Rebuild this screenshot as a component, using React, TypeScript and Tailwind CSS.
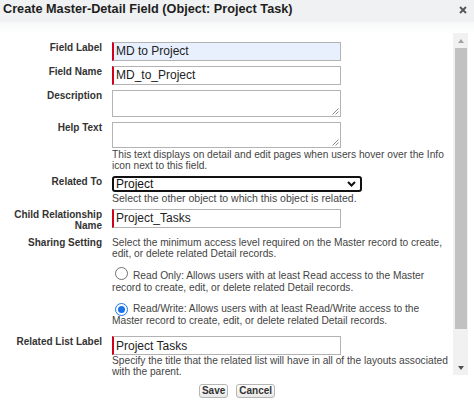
import type { ReactNode } from "react";

// Salesforce-style "Create Master-Detail Field" dialog

function Row({
  label,
  className,
  children,
}: {
  label: ReactNode;
  className: string;
  children: ReactNode;
}) {
  return (
    <div className={`flex ${className}`}>
      <div className="w-[102px] shrink-0 text-right text-[10px] font-bold leading-[11px] text-[#333]">
        {label}
      </div>
      <div className="ml-[10px] w-[338px]">{children}</div>
    </div>
  );
}

function TextBox({ value, blue, required }: { value: string; blue?: boolean; required?: boolean }) {
  return (
    <div
      className={`flex h-[19px] w-[229px] items-center border border-[#b3b3b3] pl-[2px] text-[12px] leading-[14px] text-[#222] ${
        required ? "border-l-2 border-l-[#d0021b]" : ""
      } ${blue ? "bg-[#e8f0fe]" : "bg-white"}`}
    >
      {value}
    </div>
  );
}

function Area({ h }: { h: string }) {
  return (
    <div className={`relative w-[229px] border border-[#b3b3b3] bg-white ${h}`}>
      <svg className="absolute bottom-[1px] right-[1px]" width="7" height="7" viewBox="0 0 7 7">
        <path d="M6.5 0.5 L0.5 6.5 M6.5 3.5 L3.5 6.5" stroke="#8a8a8a" strokeWidth="1" />
      </svg>
    </div>
  );
}

function Help({ children, className = "" }: { children: ReactNode; className?: string }) {
  return (
    <div className={`whitespace-nowrap text-[10.2px] leading-[11px] text-[#444] ${className}`}>
      {children}
    </div>
  );
}

function Radio({ checked }: { checked?: boolean }) {
  return checked ? (
    <span className="relative top-[1px] ml-[3px] mr-[5px] inline-flex h-[13px] w-[13px] items-center justify-center rounded-full border-[1.5px] border-[#1a73e8] bg-white align-baseline">
      <span className="h-[7px] w-[7px] rounded-full bg-[#1a73e8]" />
    </span>
  ) : (
    <span className="relative top-[1px] ml-[3px] mr-[5px] inline-block h-[13px] w-[13px] rounded-full border border-[#6f6f6f] bg-white align-baseline" />
  );
}

function Scrollbar() {
  return (
    <div className="flex h-[342px] w-[15px] shrink-0 flex-col bg-[#f1f1f1]">
      <div className="flex h-[15px] items-center justify-center">
        <svg width="6" height="4" viewBox="0 0 6 4">
          <path d="M0 4 L3 0 L6 4 Z" fill="#a3a3a3" />
        </svg>
      </div>
      <div className="mx-[1.5px] h-[281px] bg-[#c1c1c1]" />
      <div className="flex-1" />
      <div className="flex h-[15px] items-center justify-center">
        <svg width="6" height="4" viewBox="0 0 6 4">
          <path d="M0 0 L6 0 L3 4 Z" fill="#505050" />
        </svg>
      </div>
    </div>
  );
}

export default function App() {
  return (
    <div className="h-[403px] w-[474px] overflow-hidden bg-white font-['Liberation_Sans',Arial,sans-serif]">
      <div className="flex h-[22px] items-center justify-between bg-[#f0f1f2] pb-[2px] pl-[3px] pr-[7px]">
        <span className="text-[12.7px] font-bold text-[#1e1e1e]">
          Create Master-Detail Field (Object: Project Task)
        </span>
        <svg width="8" height="8" viewBox="0 0 8 8">
          <path d="M1 1 L7 7 M7 1 L1 7" stroke="#555" strokeWidth="1.8" />
        </svg>
      </div>
      <div className="h-[11px] bg-gradient-to-b from-[#f7f8f9] to-white" />

      <div className="flex h-[344px] items-start">
        <div className="h-[344px] w-[453px] shrink-0 overflow-hidden pt-[8.5px]">
          <Row label="Field Label" className="">
            <TextBox value="MD to Project" blue required />
          </Row>
          <Row label="Field Name" className="mt-[5px]">
            <TextBox value="MD_to_Project" required />
          </Row>
          <Row label="Description" className="mt-[5px]">
            <Area h="h-[27px]" />
          </Row>
          <Row label="Help Text" className="mt-[5px]">
            <Area h="h-[26px]" />
            <Help className="mt-[1px]">
              This text displays on detail and edit pages when users hover over the Info
              <br />
              icon next to this field.
            </Help>
          </Row>
          <Row label="Related To" className="mt-[5px]">
            <div className="flex h-[16px] w-[250px] items-center justify-between rounded-[3px] border-2 border-[#111] bg-white pl-[2px] pr-[4px] text-[12px] leading-[12px] text-[#111]">
              <span>Project</span>
              <svg width="9" height="6" viewBox="0 0 9 6">
                <path d="M1 1 L4.5 4.5 L8 1" fill="none" stroke="#111" strokeWidth="2" />
              </svg>
            </div>
            <Help className="mt-[1px] text-[10.5px]">
              Select the other object to which this object is related.
            </Help>
          </Row>
          <Row
            label={
              <>
                Child Relationship
                <br />
                Name
              </>
            }
            className="mt-[5px]"
          >
            <TextBox value="Project_Tasks" required />
          </Row>
          <Row label="Sharing Setting" className="mt-[6px]">
            <Help>
              Select the minimum access level required on the Master record to create,
              <br />
              edit, or delete related Detail records.
            </Help>
            <div className="mt-[7px] whitespace-nowrap text-[10.2px] leading-[12px] text-[#444]">
              <Radio />
              Read Only: Allows users with at least Read access to the Master
              <br />
              record to create, edit, or delete related Detail records.
            </div>
            <div className="mt-[8px] whitespace-nowrap text-[10.2px] leading-[11.5px] text-[#444]">
              <Radio checked />
              Read/Write: Allows users with at least Read/Write access to the
              <br />
              Master record to create, edit, or delete related Detail records.
            </div>
          </Row>
          <Row label="Related List Label" className="mt-[10px]">
            <TextBox value="Project Tasks" required />
            <Help>
              Specify the title that the related list will have in all of the layouts associated
              <br />
              with the parent.
            </Help>
          </Row>
        </div>
        <Scrollbar />
      </div>

      <div className="flex justify-center gap-[8px] pt-[7px]">
        <button className="h-[14px] rounded-[3px] border border-[#b5b5b5] bg-gradient-to-b from-white to-[#e8e8e8] px-[2px] text-[10px] font-bold leading-[12px] text-[#333]">
          Save
        </button>
        <button className="h-[14px] rounded-[3px] border border-[#b5b5b5] bg-gradient-to-b from-white to-[#e8e8e8] px-[2px] text-[10px] font-bold leading-[12px] text-[#333]">
          Cancel
        </button>
      </div>
    </div>
  );
}
